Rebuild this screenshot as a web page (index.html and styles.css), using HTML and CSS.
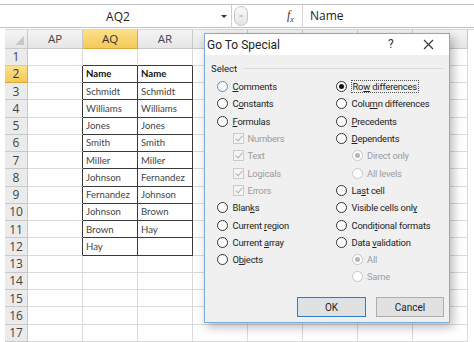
FILE: index.html
```html
<!DOCTYPE html>
<html>

<head>
  <title>Go To Special</title>
  <link rel="stylesheet" href="styles.css">
</head>

<body>

  <div class="formula-bar">
    <div class="name-box">
      <span class="name-text">AQ2</span>
      <span class="name-arrow"></span>
    </div>
    <div class="fx-area">
      <span class="knob">=</span>
      <span class="fx">f<sub>x</sub></span>
    </div>
    <div class="formula">Name</div>
  </div>

  <div class="sheet js-sheet"></div>

  <div class="dialog">
    <div class="title-bar">
      <span class="title">Go To Special</span>
      <span class="help">?</span>
      <span class="close">
        <svg width="11" height="11" viewBox="0 0 11 11"><path d="M1 1L10 10M10 1L1 10" stroke="#333" stroke-width="1.1" fill="none"/></svg>
      </span>
    </div>

    <div class="dialog-body">
      <div class="group-label"><span>Select</span></div>

      <div class="options">
        <div class="col">
          <div class="opt"><span class="radio hover"></span><span><u>C</u>omments</span></div>
          <div class="opt"><span class="radio"></span><span>C<u>o</u>nstants</span></div>
          <div class="opt"><span class="radio"></span><span><u>F</u>ormulas</span></div>
          <div class="opt sub off"><span class="check"></span><span>Numbers</span></div>
          <div class="opt sub off"><span class="check"></span><span>Text</span></div>
          <div class="opt sub off"><span class="check"></span><span>Logicals</span></div>
          <div class="opt sub off"><span class="check"></span><span>Errors</span></div>
          <div class="opt"><span class="radio"></span><span>Blan<u>k</u>s</span></div>
          <div class="opt"><span class="radio"></span><span>Current <u>r</u>egion</span></div>
          <div class="opt"><span class="radio"></span><span>Current <u>a</u>rray</span></div>
          <div class="opt"><span class="radio"></span><span>O<u>b</u>jects</span></div>
        </div>
        <div class="col">
          <div class="opt"><span class="radio on"></span><span class="focus">Ro<u>w</u> differences</span></div>
          <div class="opt"><span class="radio"></span><span>Colu<u>m</u>n differences</span></div>
          <div class="opt"><span class="radio"></span><span><u>P</u>recedents</span></div>
          <div class="opt"><span class="radio"></span><span><u>D</u>ependents</span></div>
          <div class="opt sub off"><span class="radio on"></span><span>Direct only</span></div>
          <div class="opt sub off"><span class="radio"></span><span>All levels</span></div>
          <div class="opt"><span class="radio"></span><span>La<u>s</u>t cell</span></div>
          <div class="opt"><span class="radio"></span><span>Visible cells onl<u>y</u></span></div>
          <div class="opt"><span class="radio"></span><span>Condi<u>t</u>ional formats</span></div>
          <div class="opt"><span class="radio"></span><span>Data <u>v</u>alidation</span></div>
          <div class="opt sub off"><span class="radio on"></span><span>All</span></div>
          <div class="opt sub off"><span class="radio"></span><span>Same</span></div>
        </div>
      </div>

      <div class="buttons">
        <button class="btn btn-ok">OK</button>
        <button class="btn">Cancel</button>
      </div>
    </div>
  </div>

  <script>
    const cols = ['AP', 'AQ', 'AR', 'AS', 'AT', 'AU', 'AV', 'AW'];
    // headers from AS on sit under the dialog, so they show no label
    const shown = ['AP', 'AQ', 'AR'];

    // the two name lists in AQ and AR, from row 2
    const listQ = ['Name', 'Schmidt', 'Williams', 'Jones', 'Smith', 'Miller', 'Johnson', 'Fernandez', 'Johnson', 'Brown', 'Hay'];
    const listR = ['Name', 'Schmidt', 'Williams', 'Jones', 'Smith', 'Miller', 'Fernandez', 'Johnson', 'Brown', 'Hay', ''];

    let html = '<div class="corner"><span></span></div>';
    cols.forEach(function (c) {
      const label = shown.indexOf(c) >= 0 ? c : '';
      html += '<div class="col-head' + (c === 'AQ' ? ' active' : '') + '">' + label + '</div>';
    });

    for (let r = 1; r <= 17; r++) {
      html += '<div class="row-head' + (r === 2 ? ' active' : '') + '">' + r + '</div>';
      cols.forEach(function (c) {
        let cls = 'cell';
        let text = '';
        const inTable = r >= 2 && r <= 12;
        if (inTable && (c === 'AQ' || c === 'AR')) {
          cls += ' tb';
          text = c === 'AQ' ? listQ[r - 2] : listR[r - 2];
          if (r === 2) cls += ' bold';
        }
        if (inTable && c === 'AP') cls += ' tb-left';
        if (r === 1 && (c === 'AQ' || c === 'AR')) cls += ' tb-top';
        html += '<div class="' + cls + '">' + text + '</div>';
      });
    }

    document.querySelector('.js-sheet').innerHTML = html;
  </script>
</body>

</html>
```

FILE: styles.css
```css
body {
  margin: 0;
  background-color: white;
  font-family: "Open Sans", Arial, sans-serif;
  color: #333;
  width: 474px;
  height: 342px;
  overflow: hidden;
  position: relative;
}

/* formula bar */
.formula-bar {
  margin-top: 4px;
  height: 22px;
  border-top: 1px solid #c4c4c4;
  border-bottom: 1px solid #c4c4c4;
  display: flex;
  background-color: white;
}

.name-box {
  width: 226px;
  margin-left: 5px;
  border-right: 1px solid #d0d0d0;
  position: relative;
  display: flex;
  align-items: center;
  justify-content: center;
}

.name-text {
  font-size: 12px;
  color: #222;
}

.name-arrow {
  position: absolute;
  right: 4px;
  top: 10px;
  border-left: 3px solid transparent;
  border-right: 3px solid transparent;
  border-top: 3px solid #333;
}

.fx-area {
  width: 70px;
  display: flex;
  align-items: center;
  border-right: 1px solid #d8d8d8;
}

.knob {
  width: 12px;
  height: 18px;
  margin-left: 2px;
  border: 1px solid #c8c8c8;
  border-radius: 7px;
  background: linear-gradient(#fafafa, #e4e4e4);
  font-size: 7px;
  color: #aaa;
  text-align: center;
  line-height: 17px;
}

.fx {
  margin-left: 39px;
  font-family: "Liberation Serif", serif;
  font-style: italic;
  font-size: 12px;
  color: #333;
}

.fx sub {
  font-size: 8px;
}

.formula {
  padding-left: 7px;
  font-size: 12px;
  color: #222;
  line-height: 21px;
}

/* sheet */
.sheet {
  margin-top: 1px;
  margin-left: 5px;
  display: grid;
  grid-template-columns: 23px repeat(8, 55px);
  grid-template-rows: 18.5px repeat(17, 17.25px);
  border-top: 1px solid #d6d6d6;
}

.corner,
.col-head,
.row-head {
  background: linear-gradient(#f4f4f4, #e6e6e6);
  border-right: 1px solid #c9c9c9;
  border-bottom: 1px solid #c9c9c9;
  box-sizing: border-box;
  font-size: 11.5px;
  color: #444;
  display: flex;
  align-items: center;
  justify-content: center;
}

.corner {
  position: relative;
}

.corner span {
  position: absolute;
  right: 3px;
  bottom: 3px;
  border-left: 9px solid transparent;
  border-bottom: 9px solid #c8c8c8;
}

.row-head {
  background: #ebebeb;
  font-size: 12px;
}

.col-head.active,
.row-head.active {
  background: linear-gradient(#fbe08a, #f5c958);
  color: #333;
  border-color: #d9a93a;
}

.cell {
  box-sizing: border-box;
  border-right: 1px solid #dadada;
  border-bottom: 1px solid #dadada;
  font-family: "Lato", sans-serif;
  font-size: 9.6px;
  color: #444;
  padding-left: 3px;
  display: flex;
  align-items: center;
  white-space: nowrap;
  overflow: hidden;
}

.cell.tb {
  border-right: 1.5px solid #3a3a3a;
  border-bottom: 1.5px solid #3a3a3a;
}

.cell.tb-left {
  border-right: 1.5px solid #3a3a3a;
}

.cell.tb-top {
  border-bottom: 1.5px solid #3a3a3a;
}

.cell.bold {
  font-weight: bold;
  color: #111;
}

/* dialog */
.dialog {
  position: absolute;
  left: 204px;
  top: 33px;
  width: 246px;
  height: 290px;
  box-sizing: border-box;
  border: 1px solid #7eaad8;
  background-color: #f0f0f0;
  box-shadow: 3px 4px 10px rgba(0, 0, 0, 0.28);
  display: flex;
  flex-direction: column;
  font-family: "Roboto", sans-serif;
  color: #222;
}

.title-bar {
  height: 21px;
  background-color: white;
  display: flex;
  align-items: center;
  position: relative;
}

.title {
  margin-left: 2px;
  font-size: 12px;
  color: #222;
}

.help {
  position: absolute;
  left: 183px;
  top: 3px;
  font-size: 12px;
  color: #333;
}

.close {
  position: absolute;
  left: 218px;
  top: 5px;
  line-height: 0;
}

.dialog-body {
  flex: 1;
  padding: 6px 5px 5px 6px;
  display: flex;
  flex-direction: column;
}

.group-label {
  display: flex;
  align-items: center;
  height: 14px;
  font-size: 9.5px;
}

.group-label::after {
  content: "";
  flex: 1;
  margin-left: 6px;
  margin-right: 1px;
  border-top: 1px solid #dcdcdc;
}

.options {
  margin-top: 3px;
  margin-left: 6px;
  display: grid;
  grid-template-columns: 119px 1fr;
}

.opt {
  height: 17.3px;
  display: flex;
  align-items: center;
  font-size: 9.4px;
  letter-spacing: -0.2px;
  white-space: nowrap;
}

.opt.sub {
  padding-left: 15.5px;
}

.opt.off {
  color: #9c9c9c;
}

.radio {
  width: 11px;
  height: 11px;
  box-sizing: border-box;
  border: 1px solid #333;
  border-radius: 50%;
  background-color: white;
  margin-right: 4.5px;
  position: relative;
  flex: none;
}

.radio.hover {
  border-color: #3f8fd8;
}

.radio.on::after {
  content: "";
  position: absolute;
  left: 2px;
  top: 2px;
  width: 5px;
  height: 5px;
  border-radius: 50%;
  background-color: #111;
}

.off .radio {
  border-color: #c6c6c6;
}

.off .radio.on::after {
  background-color: #b5b5b5;
}

.check {
  width: 11px;
  height: 11px;
  box-sizing: border-box;
  border: 1px solid #cacaca;
  background-color: #f4f4f4;
  margin-right: 4px;
  position: relative;
  flex: none;
}

.check::after {
  content: "";
  position: absolute;
  left: 3px;
  top: 0px;
  width: 3px;
  height: 6px;
  border-right: 1px solid #b0b0b0;
  border-bottom: 1px solid #b0b0b0;
  transform: rotate(40deg);
}

.focus {
  outline: 1px dotted #555;
  outline-offset: 0px;
  padding: 0 1px;
}

.buttons {
  margin-top: auto;
  display: flex;
  justify-content: flex-end;
  gap: 10px;
}

.btn {
  width: 68px;
  height: 20px;
  box-sizing: border-box;
  border: 1px solid #adadad;
  background-color: #e1e1e1;
  font-family: "Roboto", sans-serif;
  font-size: 10px;
  color: #222;
  padding: 0;
}

.btn-ok {
  width: 69px;
  border-color: #2f7bc4;
  box-shadow: inset 0 0 0 1px #cfe3f5;
}
```
